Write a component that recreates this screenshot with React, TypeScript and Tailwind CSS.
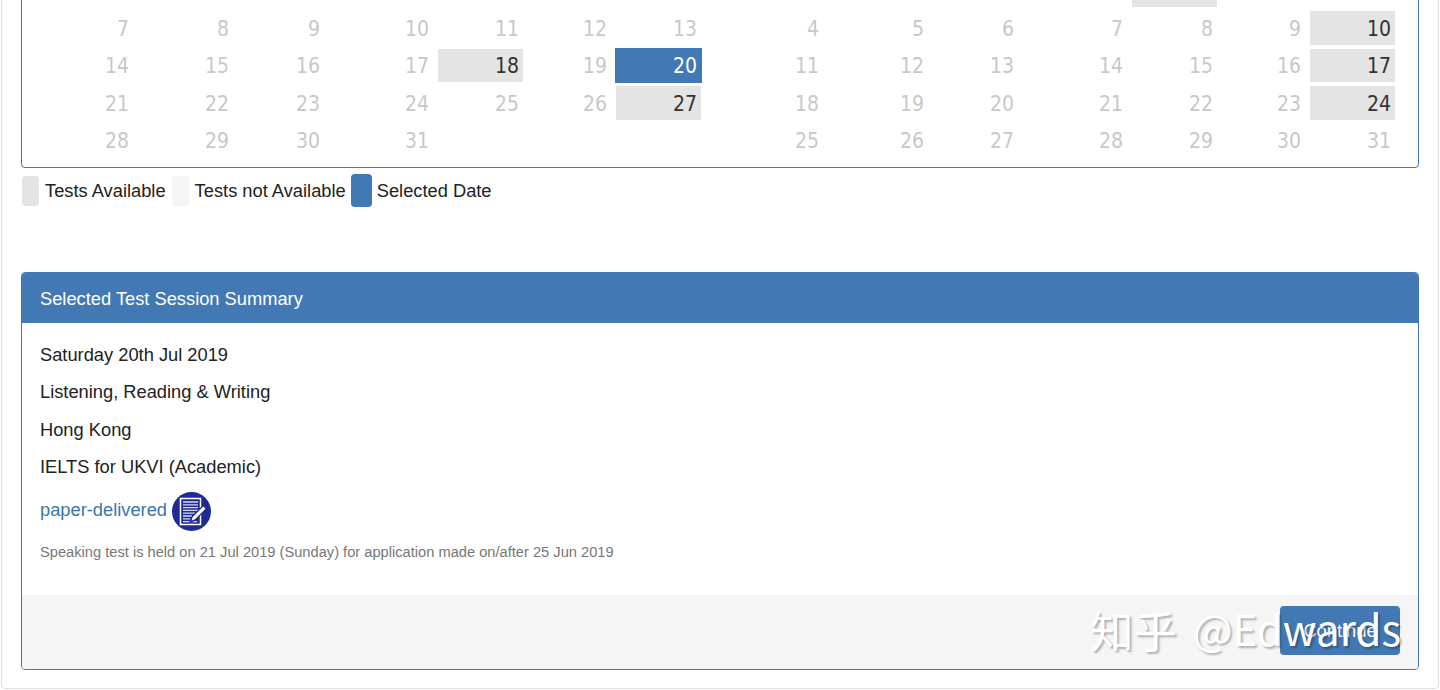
const july = [
  ["", 1, 2, 3, 4, 5, 6],
  [7, 8, 9, 10, 11, 12, 13],
  [14, 15, 16, 17, 18, 19, 20],
  [21, 22, 23, 24, 25, 26, 27],
  [28, 29, 30, 31, "", "", ""],
];

const august = [
  ["", "", "", "", 1, 2, 3],
  [4, 5, 6, 7, 8, 9, 10],
  [11, 12, 13, 14, 15, 16, 17],
  [18, 19, 20, 21, 22, 23, 24],
  [25, 26, 27, 28, 29, 30, 31],
];

function Month({
  weeks,
  columns,
  available,
  selected,
}: {
  weeks: (number | string)[][];
  columns: string;
  available: number[];
  selected?: number;
}) {
  return (
    <div className={`grid ${columns} auto-rows-[33.5px] gap-y-1`}>
      {weeks.flat().map((day, i) => {
        let tone = "text-[#c8c8c8]";
        if (day === selected) {
          tone = "bg-[#4279b4] text-white ring-1 ring-[#4279b4]";
        } else if (available.includes(day as number)) {
          tone = "bg-[#e4e4e4] text-[#333333]";
        }
        return (
          <div
            key={i}
            className={`ml-[5px] flex items-center justify-end pt-[3px] pr-1 font-['DejaVu_Sans',sans-serif] text-[21px] font-stretch-condensed ${tone}`}
          >
            {day}
          </div>
        );
      })}
    </div>
  );
}

function PaperIcon() {
  return (
    <svg width="39" height="39" viewBox="0 0 39 39" className="ml-[5px]">
      <circle cx="19.5" cy="19.5" r="19.5" fill="#1f2a93" />
      <path d="M8.5 6.5h20v26h-20z" fill="none" stroke="#fff" strokeWidth="1.5" />
      <path
        d="M11 10h15M11 12.8h15M11 15.6h15M11 18.4h15M11 21.2h12M11 24h9M11 26.8h7M11 29.6h14"
        stroke="#d5d8f5"
        strokeWidth="1.3"
      />
      <path d="M17 31l2-6 12-12 4 4-12 12z" fill="#1f2a93" />
      <path d="M19.5 28.5l1.2-3.4 10.6-10.6 2.2 2.2L23 27.3z" fill="#fff" />
    </svg>
  );
}

export default function App() {
  return (
    <div className="relative flex h-[690px] flex-col justify-end overflow-hidden bg-white font-['Liberation_Sans',sans-serif] text-[18.3px] text-[#222222]">
      <div className="mx-px mb-px rounded border border-[#dddddd] px-[19px] pb-[18px]">
        {/* Calendar */}
        <div className="flex rounded border border-[#4279b4] pb-[10px]">
          <Month
            weeks={july}
            columns="grid-cols-[111px_100px_91px_109px_90px_88px_90px]"
            available={[18, 27]}
            selected={20}
          />
          <div className="ml-[21px]">
            <Month
              weeks={august}
              columns="grid-cols-[101px_105px_90px_109px_90px_88px_90px]"
              available={[1, 10, 17, 24]}
            />
          </div>
        </div>

        {/* Legend */}
        <div className="mt-[6px] ml-px flex h-[33px] items-center">
          <span className="h-[30px] w-[17px] rounded-sm bg-[#e4e4e4]" />
          <span className="ml-[6px]">Tests Available</span>
          <span className="ml-[6px] h-[30px] w-[17px] rounded-sm bg-[#f5f5f5]" />
          <span className="ml-[6px]">Tests not Available</span>
          <span className="ml-[5px] h-[33px] w-[21px] rounded bg-[#4279b4]" />
          <span className="ml-[5px]">Selected Date</span>
        </div>

        {/* Summary */}
        <div className="mt-[65px] overflow-hidden rounded border border-[#4279b4]">
          <div className="flex h-[50px] items-center bg-[#4279b4] px-[18px] pt-px text-white">
            Selected Test Session Summary
          </div>
          <div className="px-[18px] pt-[12.5px] pb-[31px] leading-[37.5px]">
            <div>Saturday 20th Jul 2019</div>
            <div>Listening, Reading &amp; Writing</div>
            <div>Hong Kong</div>
            <div>IELTS for UKVI (Academic)</div>
            <div className="mt-[6.5px] flex items-center">
              <a href="#" className="-mt-[3px] text-[#3a76ad]">
                paper-delivered
              </a>
              <PaperIcon />
            </div>
            <div className="mt-[9px] text-[14.67px] leading-6 text-[#777777]">
              Speaking test is held on 21 Jul 2019 (Sunday) for application made on/after 25 Jun 2019
            </div>
          </div>
          <div className="flex h-[74px] justify-end bg-[#f5f5f5] pt-[11px] pr-[18px]">
            <button className="h-[49px] w-[120px] rounded bg-[#4279b4] text-white">Continue</button>
          </div>
        </div>
      </div>

      {/* Watermark */}
      <div className="absolute top-[596px] left-[1090px] font-['Noto_Sans_CJK_SC',sans-serif] text-[43.5px] leading-[68px] whitespace-nowrap text-white [text-shadow:2px_2px_2px_rgba(0,0,0,0.28)]">
        知乎 <span className="relative -top-[2px] ml-[6px] text-[42px]">@Edwards</span>
      </div>
    </div>
  );
}
